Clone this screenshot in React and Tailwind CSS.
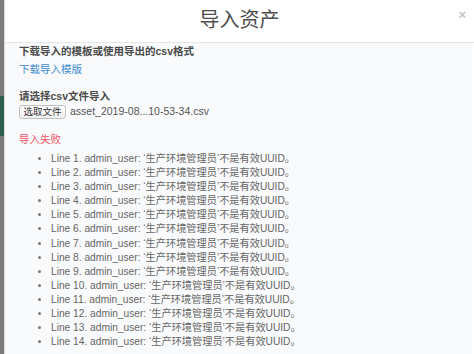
export default function App() {
  const lines = Array.from({ length: 14 }, (_, i) => i + 1);
  return (
    <div
      className="w-[474px] h-[354px] flex overflow-hidden bg-white"
      style={{ fontFamily: '"Liberation Sans", "Noto Sans CJK SC", sans-serif' }}
    >
      <div className="w-[4px] flex flex-col bg-[#7b7b7b]">
        <div className="h-[96px]" />
        <div className="h-[40px] bg-[#2f5d4b]" />
        <div className="flex-1" />
      </div>
      <div className="flex-1 flex flex-col border-l border-[#d8d8d8]">
        <div className="h-[43px] shrink-0 flex items-center justify-center relative border-b border-[#e5e5e5]">
          <div className="text-[20px] leading-none text-[#4d4d4d] mt-[-3px]">导入资产</div>
          <div className="absolute right-[8px] top-[8px] text-[13px] leading-none text-[#c4c4c4] font-bold">×</div>
        </div>
        <div className="flex-1 bg-[#f9fafb] mr-[2px] pl-[14px] pt-[1px] text-[10.5px]">
          <div className="leading-[14px] font-bold text-[#4a4a4a]">下载导入的模板或使用导出的csv格式</div>
          <div className="mt-[4px] leading-[14px] text-[#3d8ad0]">下载导入模版</div>
          <div className="mt-[13px] leading-[14px] font-bold text-[#4a4a4a]">请选择csv文件导入</div>
          <div className="mt-[2px] h-[14px] flex items-center gap-[4px]">
            <div className="h-[14px] w-[47px] flex items-center justify-center rounded-[3px] border border-[#c0c0c0] bg-gradient-to-b from-white to-[#f0f0f0] text-[9.5px] text-[#333] leading-none">
              选取文件
            </div>
            <div className="text-[10.5px] text-[#555]">asset_2019-08...10-53-34.csv</div>
          </div>
          <div className="mt-[13px] leading-[14px] text-[#ed5565]">导入失败</div>
          <ul className="mt-[6px] list-disc pl-[32px] text-[10.2px] text-[#666] marker:text-[#777]">
            {lines.map((n) => (
              <li key={n} className="leading-[14.1px]">
                Line {n}. admin_user: ‘生产环境管理员’不是有效UUID。
              </li>
            ))}
          </ul>
        </div>
      </div>
    </div>
  );
}
